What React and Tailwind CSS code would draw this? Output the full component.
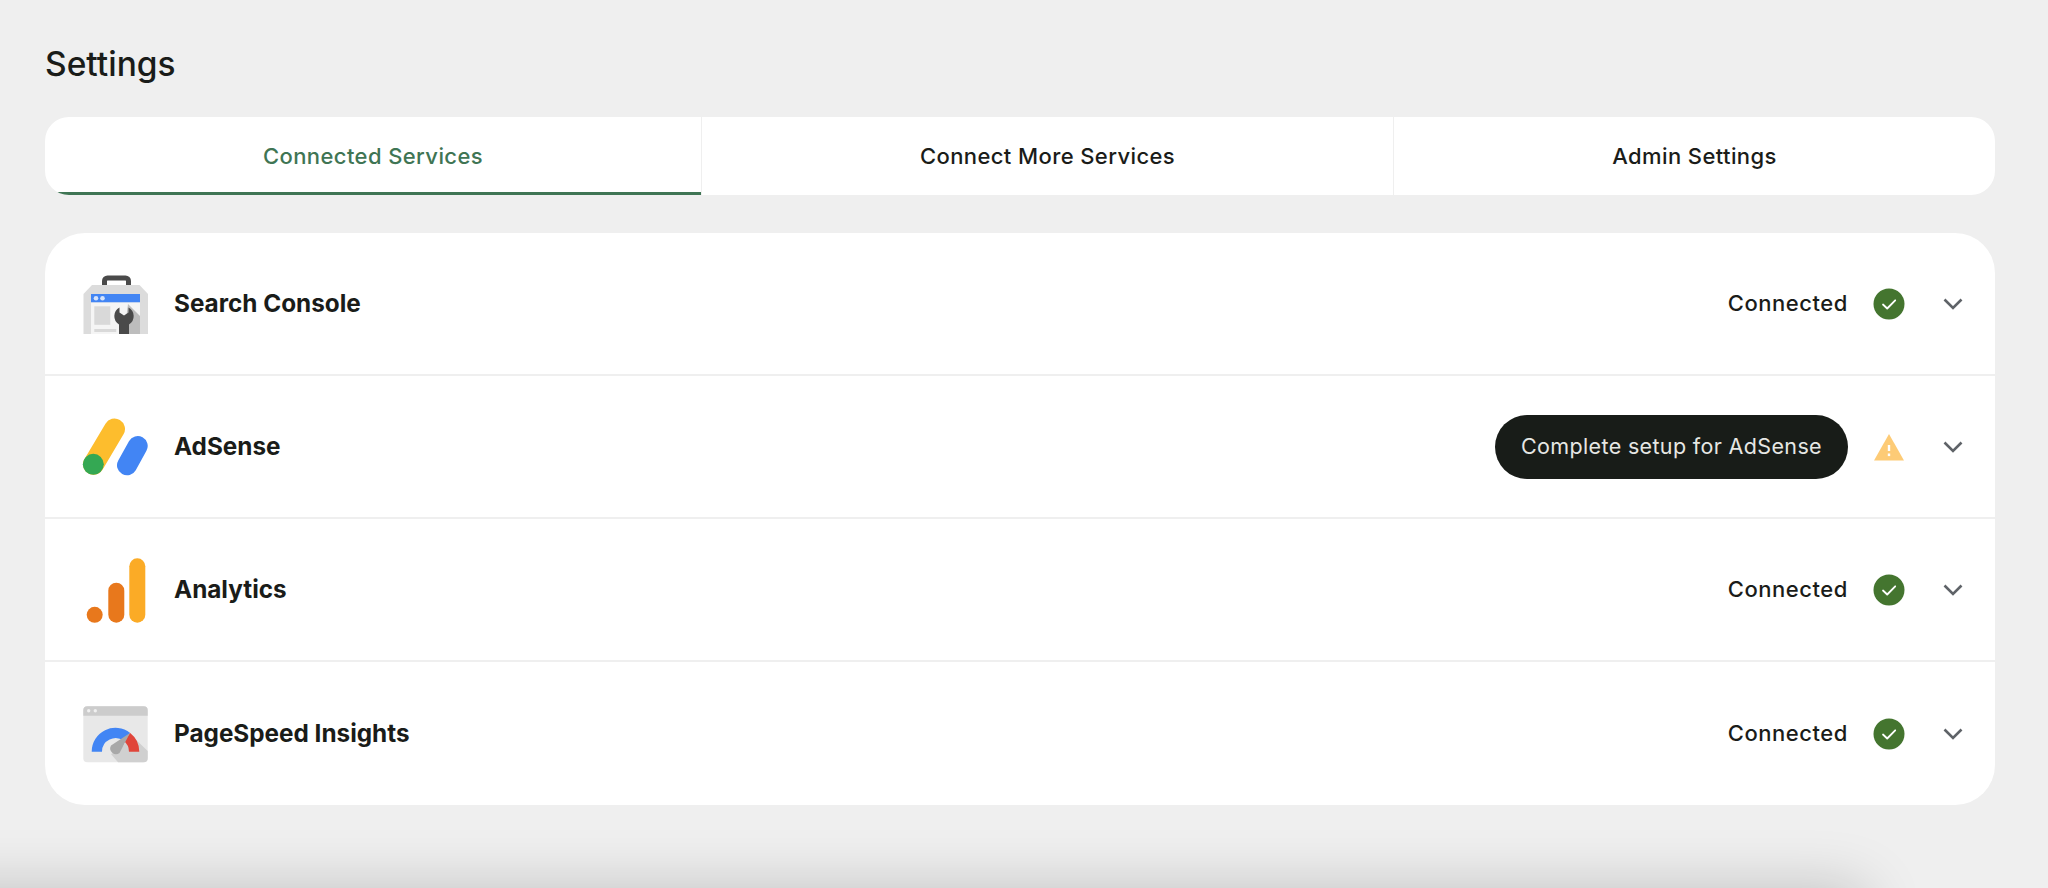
import React from "react";

const Check = () => (
  <svg width="32" height="32" viewBox="0 0 32 32" className="shrink-0">
    <circle cx="16" cy="16" r="15.5" fill="#44752f" />
    <path d="M10 16.500l4.200 4 8-8.200" fill="none" stroke="#fff" strokeWidth="1.800" strokeLinecap="round" strokeLinejoin="round" />
  </svg>
);

const Warn = () => (
  <svg width="32" height="28" viewBox="0 0 32 28" className="shrink-0">
    <path d="M16 1L31 27.500H1Z" fill="#fdcb76" />
    <rect x="14.800" y="12" width="2.400" height="6" fill="#fff" />
    <rect x="14.800" y="20.500" width="2.400" height="2.600" fill="#fff" />
  </svg>
);

const Chevron = () => (
  <svg width="20" height="12" viewBox="0 0 20 12" className="shrink-0">
    <path d="M1.500 1.500L10 10l8.500-8.500" fill="none" stroke="#5f6368" strokeWidth="2.600" />
  </svg>
);

const SearchConsole = () => (
  <svg width="70" height="70" viewBox="0 0 70 70">
    <path d="M23.500 17V12a3 3 0 0 1 3-3h18a3 3 0 0 1 3 3V17" fill="none" stroke="#4a4a4a" strokeWidth="5" />
    <path d="M11 16H58.500l8.500 9V65H2.500V25Z" fill="#dcdcdc" />
    <rect x="10" y="25" width="49" height="8.500" fill="#4285f4" />
    <circle cx="15" cy="29.300" r="2.300" fill="#d5e3fb" />
    <circle cx="21.500" cy="29.300" r="2.300" fill="#d5e3fb" />
    <rect x="10" y="33.500" width="49" height="31.500" fill="#f5f5f5" />
    <rect x="13.300" y="37.300" width="16" height="18.500" fill="#d9d9d9" />
    <rect x="13.300" y="60" width="22" height="3" fill="#d9d9d9" />
    <path d="M47 35L59 47V65H43Z" fill="#bdbdbd" />
    <path d="M38.500 38.500V43.500L43 46.500l4.500-3V38.500A9.800 9.800 0 0 1 48 55.500V65H38V55.500A9.800 9.800 0 0 1 38.500 38.500Z" fill="#4a4a4a" />
  </svg>
);

const AdSense = () => (
  <svg width="70" height="70" viewBox="0 0 70 70">
    <path d="M12.500 52.300L33.500 17" stroke="#fdbd2d" strokeWidth="21" strokeLinecap="round" />
    <path d="M56.700 34L46 53.300" stroke="#4285f4" strokeWidth="20" strokeLinecap="round" />
    <circle cx="12.300" cy="52.300" r="10.500" fill="#34a853" />
  </svg>
);

const Analytics = () => (
  <svg width="70" height="70" viewBox="0 0 70 70">
    <circle cx="13.700" cy="59.800" r="8" fill="#e8781c" />
    <rect x="27.300" y="27.700" width="16" height="40" rx="8" fill="#e8781c" />
    <rect x="48.300" y="3.300" width="16" height="64.400" rx="8" fill="#fbab26" />
  </svg>
);

const PageSpeed = () => (
  <svg width="70" height="70" viewBox="0 0 70 70">
    <rect x="2.300" y="7.300" width="64.400" height="56" rx="4" fill="#e8e8e8" />
    <path d="M2.300 16.700V11.300a4 4 0 0 1 4-4h56.400a4 4 0 0 1 4 4v5.400Z" fill="#cccccc" />
    <circle cx="7.700" cy="11.700" r="1.700" fill="#f0f0f0" />
    <circle cx="14.300" cy="11.700" r="1.700" fill="#f0f0f0" />
    <path d="M30 55L37 63.300H62.700a4 4 0 0 0 4-4V52L50 36 40 50Z" fill="#d0d0d0" />
    <path d="M10.700 52.700A23.800 23.800 0 0 1 49.200 33.900L42.800 42.100A13.500 13.500 0 0 0 21 52.700Z" fill="#4285f4" />
    <path d="M49.200 33.900A23.800 23.800 0 0 1 58.300 52.700H48A13.500 13.500 0 0 0 42.800 42.100Z" fill="#e0453a" />
    <path d="M49 34L38.500 54A5.800 5.800 0 0 1 30 46.500Z" fill="#a8a8a8" />
  </svg>
);

const rows = [
  { name: "Search Console", icon: <SearchConsole /> },
  { name: "AdSense", icon: <AdSense />, warn: true },
  { name: "Analytics", icon: <Analytics /> },
  { name: "PageSpeed Insights", icon: <PageSpeed /> },
];

const tabs = [
  { label: "Connected Services", w: "w-[656px]", active: true },
  { label: "Connect More Services", w: "w-[692px]" },
  { label: "Admin Settings", w: "flex-1" },
];

export default function App() {
  return (
    <div className="relative h-[888px] w-[2048px] overflow-hidden bg-[#efefef] font-['Inter',sans-serif] text-[#1a1c19]">
      <div className="flex flex-col pl-[45px] pr-[53px] pt-[42px]">
        <h1 className="h-[45px] text-[33.5px] font-medium leading-[45px]">Settings</h1>
        <div className="mt-[30px] flex h-[78px] overflow-hidden rounded-[24px] bg-white">
          {tabs.map((t, i) => (
            <div
              key={t.label}
              className={`${t.w} flex items-center justify-center text-[22px] font-medium tracking-[0.4px] ${i > 0 ? "border-l border-[#efefef]" : ""} ${t.active ? "text-[#3f7554] shadow-[inset_0_-3px_0_#3f7554]" : ""}`}
            >
              {t.label}
            </div>
          ))}
        </div>
        <div className="mt-[38px] flex flex-col rounded-[40px] bg-white">
          {rows.map((r, i) => (
            <div
              key={r.name}
              className={`flex h-[143px] items-center pl-[36px] pr-[32px] ${i < rows.length - 1 ? "border-b-2 border-[#efefef]" : ""}`}
            >
              <div className="flex w-[70px] items-center justify-center">{r.icon}</div>
              <div className="ml-[23px] flex-1 text-[24.3px] font-bold">{r.name}</div>
              {r.warn ? (
                <div className="flex h-[64px] w-[353px] items-center justify-center rounded-full bg-[#181c18] text-[21.5px] tracking-[0.35px] text-[#e6e7e4]">
                  Complete setup for AdSense
                </div>
              ) : (
                <div className="text-[22px] font-medium tracking-[0.55px]">Connected</div>
              )}
              <div className="ml-[25px] flex w-[32px] justify-center">{r.warn ? <Warn /> : <Check />}</div>
              <div className="ml-[38px] flex w-[20px] justify-center"><Chevron /></div>
            </div>
          ))}
        </div>
      </div>
      <div className="absolute bottom-[-100px] left-[-100px] h-[100px] w-[1965px] shadow-[0_0_60px_0_rgba(0,0,0,0.2)]" />
    </div>
  );
}
